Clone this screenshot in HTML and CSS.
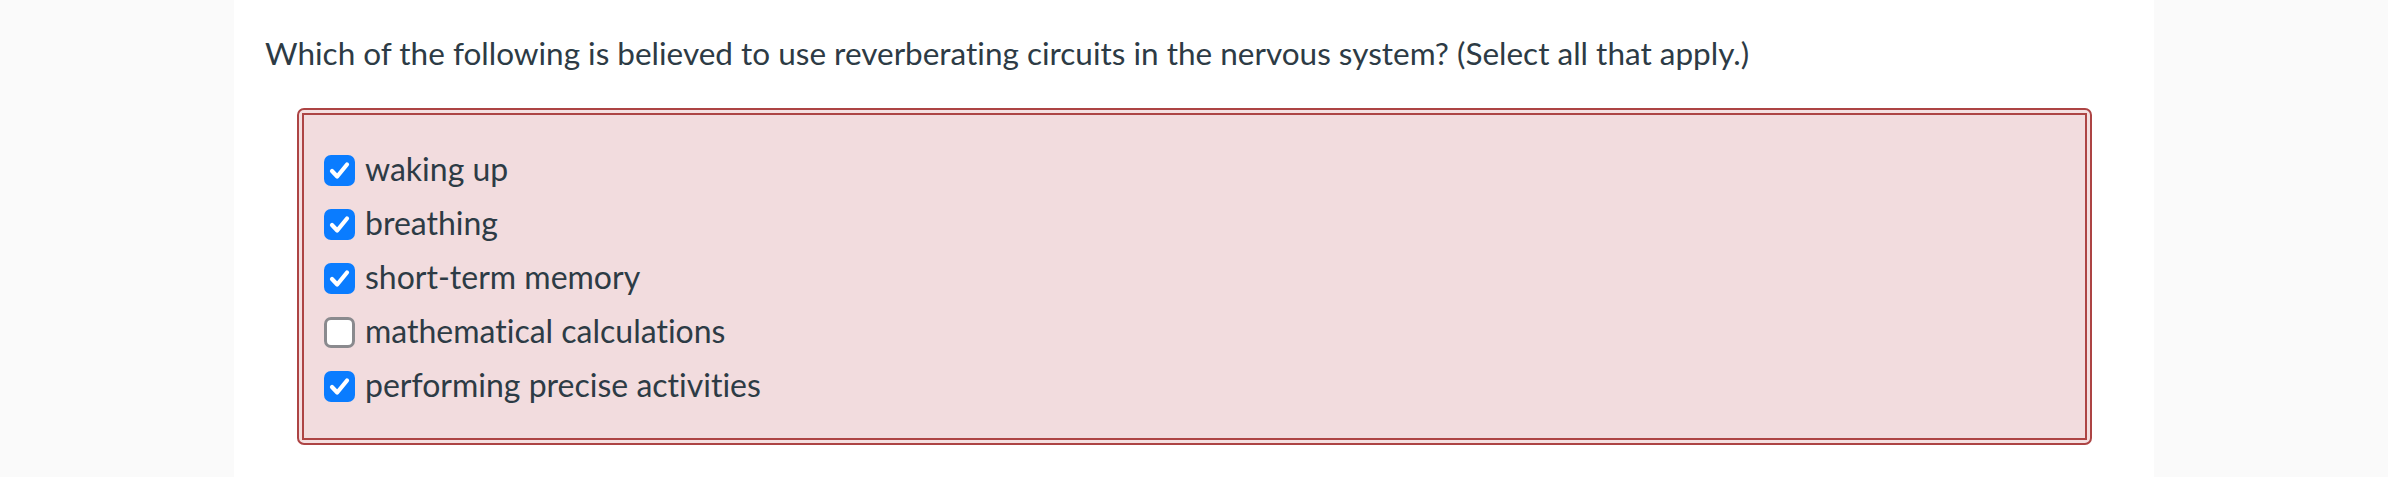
FILE: index.html
```html
<!DOCTYPE html>
<html>
<head>
<meta charset="utf-8">
<link rel="stylesheet" href="styles.css">
</head>
<body>
<div class="page">
  <main class="panel">
    <p class="question">Which of the following is believed to use reverberating circuits in the nervous system? (Select all that apply.)</p>
    <div class="answers-outer">
      <div class="answers">
        <label class="opt"><span class="box checked"><svg viewBox="0 0 31 31"><path d="M8 16 L13.2 21.5 L23 9.5"/></svg></span>waking up</label>
        <label class="opt"><span class="box checked"><svg viewBox="0 0 31 31"><path d="M8 16 L13.2 21.5 L23 9.5"/></svg></span>breathing</label>
        <label class="opt"><span class="box checked"><svg viewBox="0 0 31 31"><path d="M8 16 L13.2 21.5 L23 9.5"/></svg></span>short-term memory</label>
        <label class="opt"><span class="box"></span>mathematical calculations</label>
        <label class="opt"><span class="box checked"><svg viewBox="0 0 31 31"><path d="M8 16 L13.2 21.5 L23 9.5"/></svg></span>performing precise activities</label>
      </div>
    </div>
  </main>
</div>
</body>
</html>
```

FILE: styles.css
```css
html, body {
  margin: 0;
  padding: 0;
  background: #fafafa;
  font-family: Lato, "Noto Sans", sans-serif;
  color: #2d3b45;
  font-variant-ligatures: no-common-ligatures;
}
.page {
  display: flex;
  padding-left: 234px;
  height: 477px;
}
.panel {
  width: 1920px;
  background: #ffffff;
  padding: 26px 0 0 31px;
  box-sizing: border-box;
}
.question {
  margin: 0;
  font-size: 31.5px;
  line-height: 54px;
}
.answers-outer {
  margin: 28px 0 0 32px;
  width: 1795px;
  height: 337px;
  box-sizing: border-box;
  border: 2px solid #ad4444;
  border-radius: 7px;
  padding: 3px;
  background: #f4dfe0;
}
.answers {
  height: 100%;
  box-sizing: border-box;
  border: 2px solid #ad4444;
  background: #f2dcde;
  padding: 27px 20px 0 20px;
  display: flex;
  flex-direction: column;
}
.opt {
  display: flex;
  align-items: center;
  height: 54px;
  font-size: 32px;
  line-height: 54px;
}
.box {
  width: 31px;
  height: 31px;
  box-sizing: border-box;
  border-radius: 7px;
  border: 3px solid #8a8a8e;
  background: #ffffff;
  margin: 3px 10px 0 0;
  flex: none;
  display: flex;
}
.box.checked {
  border: none;
  background: #0a7cff;
}
.box svg {
  width: 31px;
  height: 31px;
}
.box path {
  fill: none;
  stroke: #ffffff;
  stroke-width: 4.2;
  stroke-linecap: round;
  stroke-linejoin: round;
}
```
